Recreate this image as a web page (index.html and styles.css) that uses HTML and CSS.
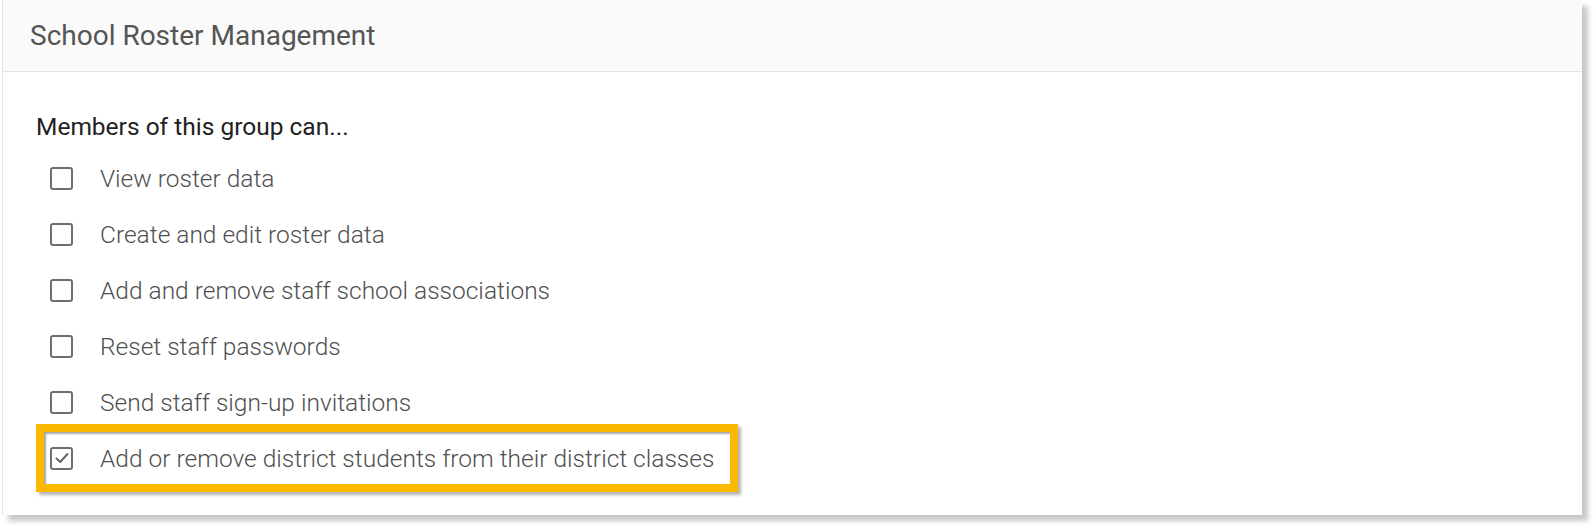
FILE: index.html
```html
<!DOCTYPE html>
<html>
<head>
<meta charset="utf-8">
<link rel="stylesheet" href="styles.css">
</head>
<body>
<div class="card">
  <div class="card-header">School Roster Management</div>
  <div class="card-body">
    <div class="intro">Members of this group can...</div>
    <ul class="perms">
      <li class="perm"><span class="box"></span><span class="label">View roster data</span></li>
      <li class="perm"><span class="box"></span><span class="label">Create and edit roster data</span></li>
      <li class="perm"><span class="box"></span><span class="label">Add and remove staff school associations</span></li>
      <li class="perm"><span class="box"></span><span class="label">Reset staff passwords</span></li>
      <li class="perm"><span class="box"></span><span class="label">Send staff sign-up invitations</span></li>
      <li class="perm highlight"><span class="box checked"><svg viewBox="0 0 18 18" width="18" height="18"><polyline points="3.5,9.5 7.2,13 14.5,5" fill="none" stroke="#666" stroke-width="2" stroke-linecap="round" stroke-linejoin="round"/></svg></span><span class="label">Add or remove district students from their district classes</span></li>
    </ul>
  </div>
</div>
</body>
</html>
```
FILE: styles.css
```css
html, body {
  margin: 0;
  padding: 0;
  background: #ffffff;
}
body {
  font-family: Roboto, "Noto Sans", Arial, sans-serif;
  padding: 0 12px 12px 2px;
}
.card {
  background: #ffffff;
  border-left: 1px solid #e2e2e2;
  box-shadow: 6px 6px 5px rgba(0, 0, 0, 0.22);
  height: 515px;
  box-sizing: border-box;
}
.card-header {
  background: #fafafa;
  border-bottom: 1px solid #e3e3e3;
  height: 72px;
  box-sizing: border-box;
  padding-left: 27px;
  display: flex;
  align-items: center;
  font-size: 28px;
  color: #555555;
}
.card-body {
  padding: 40px 0 0 33px;
}
.intro {
  font-size: 24.5px;
  color: #222222;
  line-height: 30px;
  margin-bottom: 8px;
}
.perms {
  list-style: none;
  margin: 0;
  padding: 0;
}
.perm {
  display: flex;
  align-items: center;
  height: 56px;
  padding-left: 14px;
  width: fit-content;
  box-sizing: border-box;
}
.box {
  width: 23px;
  height: 23px;
  box-sizing: border-box;
  border: 2.5px solid #6e6e6e;
  border-radius: 3px;
  display: flex;
  align-items: center;
  justify-content: center;
  flex: none;
}
.label {
  margin-left: 27px;
  font-size: 24.5px;
  font-weight: 300;
  color: #505050;
}
.highlight {
  height: 68px;
  margin: -6px 0 -6px 0;
  padding: 0 16px 0 6px;
  border: 8px solid #fbb800;
  box-shadow: inset 2px 2px 2px rgba(0, 0, 0, 0.35), 3px 3px 3px rgba(0, 0, 0, 0.3);
}
```
